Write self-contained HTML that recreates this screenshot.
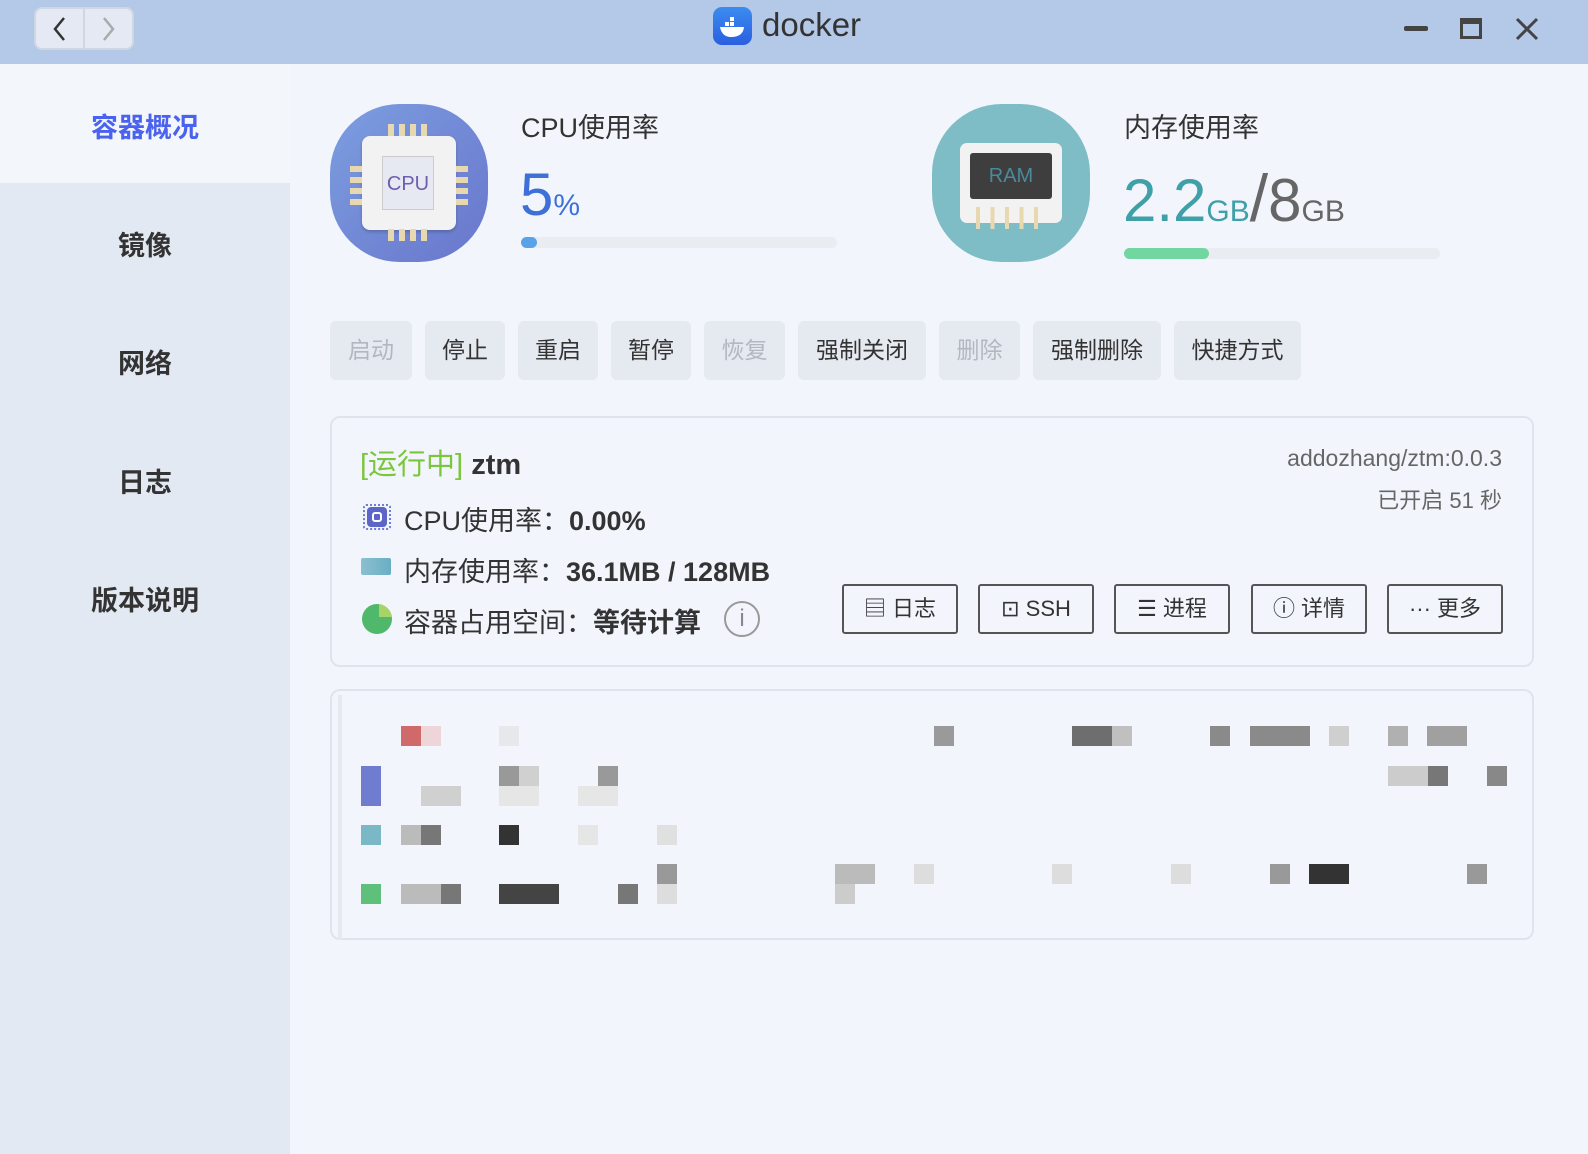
<!DOCTYPE html>
<html><head><meta charset="utf-8"><style>
*{margin:0;padding:0;box-sizing:border-box}
body{width:1588px;height:1154px;overflow:hidden;background:#f2f6fc;font-family:"Liberation Sans","Noto Sans CJK SC",sans-serif;color:#333;position:relative}
.a{position:absolute}
.top{left:0;top:0;width:1588px;height:64px;background:#b4c8e8}
.side{left:0;top:64px;width:290px;height:1090px;background:#e3e9f2}
.nav{position:absolute;left:0;width:290px;text-align:center;font-size:27px;font-weight:bold;color:#333}
.btn{position:absolute;top:321px;height:59px;line-height:59px;background:#e5e9f0;border-radius:6px;text-align:center;font-size:23px;color:#333}
.dis{color:#b3b8c0}
.card{position:absolute;left:330px;width:1204px;border:2px solid #dfe4ec;border-radius:10px;background:#f2f6fc}
.sb{position:absolute;top:584px;width:116px;height:50px;border:2px solid #555;border-radius:3px;font-size:22px;line-height:46px;text-align:center;color:#333}
.px{position:absolute;width:20px;height:20px}
</style></head><body>
<div class="a top"></div>
<div class="a" style="left:34px;top:7px;width:100px;height:43px;border-radius:8px;background:#e4e9f3;border:2px solid #cfd7e5"></div>
<div class="a" style="left:83px;top:9px;width:2px;height:40px;background:#cfd7e5"></div>
<svg class="a" style="left:48px;top:14px" width="24" height="30"><path d="M16 4 L7 15 L16 26" stroke="#333" stroke-width="2.5" fill="none"/></svg>
<svg class="a" style="left:96px;top:14px" width="24" height="30"><path d="M8 4 L17 15 L8 26" stroke="#aaa" stroke-width="2.5" fill="none"/></svg>
<div class="a" style="left:713px;top:7px;width:39px;height:38px;border-radius:9px;background:linear-gradient(#3b8cf0,#2a5fe0)"></div>
<svg class="a" style="left:717px;top:12px" width="32" height="28"><path d="M3 15 H27 Q26 25 14 25 Q5 25 3 15Z" fill="#fff"/><rect x="8" y="10" width="4" height="4" fill="#fff"/><rect x="13" y="10" width="4" height="4" fill="#fff"/><rect x="13" y="5" width="4" height="4" fill="#fff"/></svg>
<div class="a" style="left:762px;top:6px;font-size:33px;color:#333">docker</div>
<div class="a" style="left:1404px;top:26px;width:24px;height:5px;background:#444;border-radius:2px"></div>
<div class="a" style="left:1460px;top:18px;width:22px;height:21px;border:3px solid #444;border-top-width:6px"></div>
<svg class="a" style="left:1514px;top:16px" width="26" height="26"><path d="M3 3L23 23M23 3L3 23" stroke="#444" stroke-width="3"/></svg>

<div class="a side"></div>
<div class="a" style="left:0;top:64px;width:290px;height:119px;background:#f3f6fb"></div>
<div class="nav" style="top:106px;color:#4a62f0">容器概况</div>
<div class="nav" style="top:224px">镜像</div>
<div class="nav" style="top:342px">网络</div>
<div class="nav" style="top:461px">日志</div>
<div class="nav" style="top:579px">版本说明</div>

<div class="a" style="left:330px;top:104px;width:158px;height:158px;border-radius:44%;background:linear-gradient(135deg,#7c9ee0,#6976cc)"></div>
<div class="a" style="left:362px;top:136px;width:94px;height:94px;background:#f2f2f2;border-radius:8px;box-shadow:0 2px 3px rgba(0,0,0,.2)"></div>
<div class="a" style="left:382px;top:156px;width:52px;height:54px;background:#e6e8f2;border:1px solid #ccc;font-size:20px;color:#6a5fb0;text-align:center;line-height:54px">CPU</div>
<div class="a" style="left:388px;top:124px;width:42px;height:12px;background:repeating-linear-gradient(90deg,#e8d8b0 0 6px,transparent 6px 11px)"></div>
<div class="a" style="left:388px;top:229px;width:42px;height:12px;background:repeating-linear-gradient(90deg,#e8d8b0 0 6px,transparent 6px 11px)"></div>
<div class="a" style="left:350px;top:166px;width:12px;height:40px;background:repeating-linear-gradient(180deg,#e8d8b0 0 6px,transparent 6px 11px)"></div>
<div class="a" style="left:456px;top:166px;width:12px;height:40px;background:repeating-linear-gradient(180deg,#e8d8b0 0 6px,transparent 6px 11px)"></div>
<div class="a" style="left:521px;top:106px;font-size:27px;color:#333">CPU使用率</div>
<div class="a" style="left:520px;top:160px;font-size:60px;color:#3e70d8">5<span style="font-size:30px">%</span></div>
<div class="a" style="left:521px;top:237px;width:316px;height:11px;border-radius:6px;background:#e9ecf1"></div>
<div class="a" style="left:521px;top:237px;width:16px;height:11px;border-radius:6px;background:#5aa2e8"></div>

<div class="a" style="left:932px;top:104px;width:158px;height:158px;border-radius:44%;background:#7fbdc6"></div>
<div class="a" style="left:960px;top:143px;width:102px;height:80px;background:#f2f2f2;border-radius:7px"></div>
<div class="a" style="left:970px;top:153px;width:82px;height:46px;background:#3e3e3e;border-radius:3px;color:#4a8a9a;font-size:20px;text-align:center;line-height:46px">RAM</div>
<div class="a" style="left:976px;top:207px;width:70px;height:22px;background:repeating-linear-gradient(90deg,#e8d8b0 0 4px,transparent 4px 14.5px)"></div>
<div class="a" style="left:1124px;top:106px;font-size:27px;color:#333">内存使用率</div>
<div class="a" style="left:1123px;top:160px;font-size:60px;color:#3fa0a8;white-space:nowrap">2.2<span style="font-size:30px">GB</span><span style="color:#666;font-size:66px;font-weight:300">/</span><span style="color:#666">8<span style="font-size:30px">GB</span></span></div>
<div class="a" style="left:1124px;top:248px;width:316px;height:11px;border-radius:6px;background:#e9ecf1"></div>
<div class="a" style="left:1124px;top:248px;width:85px;height:11px;border-radius:6px;background:#72d6a0"></div>

<div class="btn dis" style="left:330px;width:82px">启动</div>
<div class="btn" style="left:425px;width:80px">停止</div>
<div class="btn" style="left:518px;width:80px">重启</div>
<div class="btn" style="left:611px;width:80px">暂停</div>
<div class="btn dis" style="left:704px;width:81px">恢复</div>
<div class="btn" style="left:798px;width:128px">强制关闭</div>
<div class="btn dis" style="left:939px;width:81px">删除</div>
<div class="btn" style="left:1033px;width:128px">强制删除</div>
<div class="btn" style="left:1174px;width:127px">快捷方式</div>

<div class="card" style="top:416px;height:251px"></div>
<div class="a" style="left:360px;top:441px;font-size:29px;color:#333"><span style="color:#7cc63e">[运行中]</span> <b>ztm</b></div>
<div class="a" style="left:1200px;top:445px;width:302px;text-align:right;font-size:23px;color:#666">addozhang/ztm:0.0.3</div>
<div class="a" style="left:1200px;top:483px;width:302px;text-align:right;font-size:22px;color:#666">已开启 51 秒</div>
<div class="a" style="left:363px;top:504px;width:28px;height:26px;border:2px dotted #6f7cd8;border-radius:3px"></div>
<div class="a" style="left:367px;top:507px;width:20px;height:20px;background:#5b66c8;border-radius:4px"></div>
<div class="a" style="left:372px;top:512px;width:10px;height:10px;border:2px solid #fff;border-radius:3px"></div>
<div class="a" style="left:404px;top:499px;font-size:27px">CPU使用率：<b style="font-weight:600">0.00%</b></div>
<div class="a" style="left:361px;top:558px;width:30px;height:17px;background:linear-gradient(90deg,#8ac0d0,#6aaec4);border-radius:2px"></div>
<div class="a" style="left:404px;top:550px;font-size:27px">内存使用率：<b style="font-weight:600">36.1MB / 128MB</b></div>
<svg class="a" style="left:360px;top:602px" width="34" height="34"><circle cx="17" cy="17" r="15" fill="#4fb86a"/><path d="M19 2 A15 15 0 0 1 32 15 L19 15Z" fill="#a6d466"/></svg>
<div class="a" style="left:404px;top:601px;font-size:27px">容器占用空间：<b>等待计算</b></div>
<div class="a" style="left:724px;top:601px;width:36px;height:36px;border:2px solid #999;border-radius:50%;text-align:center;font-size:24px;line-height:32px;color:#888">i</div>
<div class="sb" style="left:842px">▤ 日志</div>
<div class="sb" style="left:978px">⊡ SSH</div>
<div class="sb" style="left:1114px">☰ 进程</div>
<div class="sb" style="left:1251px">ⓘ 详情</div>
<div class="sb" style="left:1387px">··· 更多</div>

<div class="card" style="top:689px;height:251px"></div>
<div class="a" style="left:338px;top:695px;width:4px;height:245px;background:#e6e9ee"></div>
<div class="px" style="left:401px;top:726px;background:#d06a6a"></div><div class="px" style="left:421px;top:726px;background:#eed6d8"></div>
<div class="px" style="left:499px;top:726px;background:#e6e8ec"></div>
<div class="px" style="left:934px;top:726px;background:#9a9a9a"></div>
<div class="px" style="left:1072px;top:726px;width:40px;background:#6e6e6e"></div><div class="px" style="left:1112px;top:726px;background:#c0c0c0"></div>
<div class="px" style="left:1210px;top:726px;background:#8a8a8a"></div><div class="px" style="left:1250px;top:726px;width:60px;background:#8a8a8a"></div><div class="px" style="left:1329px;top:726px;background:#cfcfcf"></div>
<div class="px" style="left:1388px;top:726px;background:#b0b0b0"></div><div class="px" style="left:1427px;top:726px;width:40px;background:#a0a0a0"></div>
<div class="px" style="left:361px;top:766px;height:40px;background:#6f7cd0"></div>
<div class="px" style="left:499px;top:766px;background:#999"></div><div class="px" style="left:519px;top:766px;background:#d0d0d0"></div><div class="px" style="left:598px;top:766px;background:#999"></div>
<div class="px" style="left:421px;top:786px;width:40px;background:#d0d0d0"></div><div class="px" style="left:499px;top:786px;width:40px;background:#e6e6e6"></div><div class="px" style="left:578px;top:786px;width:40px;background:#e6e6e6"></div>
<div class="px" style="left:1388px;top:766px;width:40px;background:#ccc"></div><div class="px" style="left:1428px;top:766px;background:#777"></div><div class="px" style="left:1487px;top:766px;background:#888"></div>
<div class="px" style="left:361px;top:825px;background:#7ab8c6"></div><div class="px" style="left:401px;top:825px;background:#bbb"></div><div class="px" style="left:421px;top:825px;background:#777"></div>
<div class="px" style="left:499px;top:825px;background:#333"></div><div class="px" style="left:578px;top:825px;background:#e6e6e6"></div><div class="px" style="left:657px;top:825px;background:#e0e0e0"></div>
<div class="px" style="left:361px;top:884px;background:#5ec07a"></div><div class="px" style="left:401px;top:884px;width:40px;background:#bbb"></div><div class="px" style="left:441px;top:884px;background:#777"></div>
<div class="px" style="left:499px;top:884px;width:60px;background:#444"></div><div class="px" style="left:618px;top:884px;background:#777"></div><div class="px" style="left:657px;top:864px;background:#999"></div><div class="px" style="left:657px;top:884px;background:#ddd"></div>
<div class="px" style="left:835px;top:864px;width:40px;background:#bbb"></div><div class="px" style="left:835px;top:884px;background:#ccc"></div><div class="px" style="left:914px;top:864px;background:#ddd"></div>
<div class="px" style="left:1052px;top:864px;background:#ddd"></div><div class="px" style="left:1171px;top:864px;background:#ddd"></div><div class="px" style="left:1270px;top:864px;background:#999"></div>
<div class="px" style="left:1309px;top:864px;width:40px;background:#333"></div><div class="px" style="left:1467px;top:864px;background:#999"></div>
</body></html>
